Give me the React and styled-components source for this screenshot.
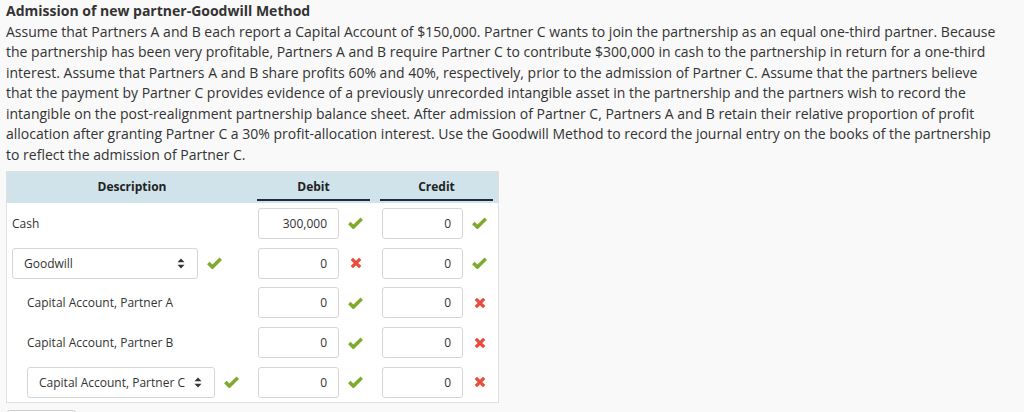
import React from "react";
import styled, { createGlobalStyle } from "styled-components";

const GlobalStyle = createGlobalStyle`
  html, body {
    margin: 0;
    padding: 0;
    background: #f9f9f9;
  }
  body {
    font-family: "Open Sans", "DejaVu Sans", sans-serif;
    color: #333;
  }
`;

const lines = [
  "Assume that Partners A and B each report a Capital Account of $150,000. Partner C wants to join the partnership as an equal one-third partner. Because",
  "the partnership has been very profitable, Partners A and B require Partner C to contribute $300,000 in cash to the partnership in return for a one-third",
  "interest. Assume that Partners A and B share profits 60% and 40%, respectively, prior to the admission of Partner C. Assume that the partners believe",
  "that the payment by Partner C provides evidence of a previously unrecorded intangible asset in the partnership and the partners wish to record the",
  "intangible on the post-realignment partnership balance sheet. After admission of Partner C, Partners A and B retain their relative proportion of profit",
  "allocation after granting Partner C a 30% profit-allocation interest. Use the Goodwill Method to record the journal entry on the books of the partnership",
  "to reflect the admission of Partner C.",
];

const rows = [
  { label: "Cash", kind: "text", indent: false, debit: "300,000", debitOk: true, credit: "0", creditOk: true },
  { label: "Goodwill", kind: "select", indent: false, width: 186, debit: "0", debitOk: false, credit: "0", creditOk: true },
  { label: "Capital Account, Partner A", kind: "text", indent: true, debit: "0", debitOk: true, credit: "0", creditOk: false },
  { label: "Capital Account, Partner B", kind: "text", indent: true, debit: "0", debitOk: true, credit: "0", creditOk: false },
  { label: "Capital Account, Partner C", kind: "select", indent: true, width: 188, debit: "0", debitOk: true, credit: "0", creditOk: false },
];

/**
 * Icons
 */
const Check = () => (
  <svg width="15" height="12" viewBox="0 0 15 12">
    <path d="M1.3 6 L5.4 10.1 L13.8 1.7" fill="none" stroke="#7fab2d" strokeWidth="3.5" />
  </svg>
);

const Cross = () => (
  <svg width="12" height="12" viewBox="0 0 12 12">
    <path d="M1.8 1.8 L10.2 10.2 M10.2 1.8 L1.8 10.2" fill="none" stroke="#ea4c3c" strokeWidth="3.3" />
  </svg>
);

const SortArrows = () => (
  <svg width="8" height="11" viewBox="0 0 8 11">
    <path d="M4 0.5 L7.5 4.3 L0.5 4.3 Z M4 10.5 L7.5 6.7 L0.5 6.7 Z" fill="#333" />
  </svg>
);

const Mark = ({ ok }) => <MarkBox>{ok ? <Check /> : <Cross />}</MarkBox>;

/**
 * Component definition
 */
export default function App() {
  return (
    <Page>
      <GlobalStyle />
      <Title>Admission of new partner-Goodwill Method</Title>
      <Text>
        {lines.map((line, index) => (
          <Line key={`line_${index}`}>{line}</Line>
        ))}
      </Text>
      <Journal>
        <HeadRow>
          <HeadCell>Description</HeadCell>
          <HeadCell $underline>Debit</HeadCell>
          <HeadCell $underline>Credit</HeadCell>
        </HeadRow>
        {rows.map((row, index) => (
          <Row key={`row_${index}`}>
            <DescCell $indent={row.indent}>
              {row.kind === "select" ? (
                <>
                  <Select $width={row.width}>
                    <span>{row.label}</span>
                    <SortArrows />
                  </Select>
                  <Mark ok />
                </>
              ) : (
                <Label>{row.label}</Label>
              )}
            </DescCell>
            <AmountCell>
              <Amount>{row.debit}</Amount>
              <Mark ok={row.debitOk} />
            </AmountCell>
            <AmountCell $credit>
              <Amount>{row.credit}</Amount>
              <Mark ok={row.creditOk} />
            </AmountCell>
          </Row>
        ))}
      </Journal>
      <SubmitButton aria-label="Check" />
    </Page>
  );
}

/**
 * Component styles
 */
const Page = styled.div`
  padding: 1px 6px 0 6px;
  height: 411px;
  overflow: hidden;
`;

const Title = styled.h2`
  margin: 0;
  font-size: 14px;
  font-weight: 700;
  line-height: 20.5px;
  color: #333;
`;

const Text = styled.p`
  margin: 0;
  font-size: 14px;
  line-height: 20.5px;
  color: #333;
`;

const Line = styled.span`
  display: block;
  white-space: nowrap;
`;

const Journal = styled.div`
  margin-top: 6px;
  width: 491px;
  background: #fff;
  border: 1px solid #e0e0e0;
`;

const grid = `
  display: grid;
  grid-template-columns: 250px 113px 123px;
  & > :nth-child(3) {
    margin-left: 10px;
  }
`;

const HeadRow = styled.div`
  ${grid}
  height: 31px;
  background: #d0e3ea;
`;

const HeadCell = styled.div`
  display: flex;
  align-items: center;
  justify-content: center;
  height: 25px;
  margin-top: 2px;
  font-size: 12px;
  font-weight: 700;
  color: #222;
  border-bottom: ${(p) => (p.$underline ? "2px solid #1d2b3a" : "2px solid transparent")};
`;

const Row = styled.div`
  ${grid}
  height: 39.75px;
  align-items: center;
  padding-top: 1px;
  box-sizing: border-box;
`;

const DescCell = styled.div`
  display: flex;
  align-items: center;
  padding-left: ${(p) => (p.$indent ? "20px" : "5px")};
`;

const Label = styled.span`
  font-size: 12px;
  color: #333;
`;

const Select = styled.div`
  display: flex;
  align-items: center;
  justify-content: space-between;
  box-sizing: border-box;
  width: ${(p) => p.$width}px;
  height: 31px;
  padding: 0 12px 0 11px;
  background: #fff;
  border: 1px solid #d6d6d6;
  border-radius: 3px;
  font-size: 12px;
  color: #333;
`;

const AmountCell = styled.div`
  display: flex;
  align-items: center;
  padding-left: ${(p) => (p.$credit ? "2px" : "1px")};
`;

const Amount = styled.div`
  display: flex;
  align-items: center;
  justify-content: flex-end;
  box-sizing: border-box;
  width: 81px;
  height: 31px;
  padding-right: 11px;
  background: #fff;
  border: 1px solid #d6d6d6;
  border-radius: 3px;
  font-size: 12px;
  color: #333;
`;

const MarkBox = styled.span`
  display: inline-flex;
  align-items: center;
  justify-content: center;
  width: 15px;
  margin-left: 9px;
`;

const SubmitButton = styled.button`
  display: block;
  margin-top: 7px;
  margin-left: 1px;
  width: 69px;
  height: 30px;
  background: #fff;
  border: 1px solid #ccc;
  border-radius: 3px;
`;
